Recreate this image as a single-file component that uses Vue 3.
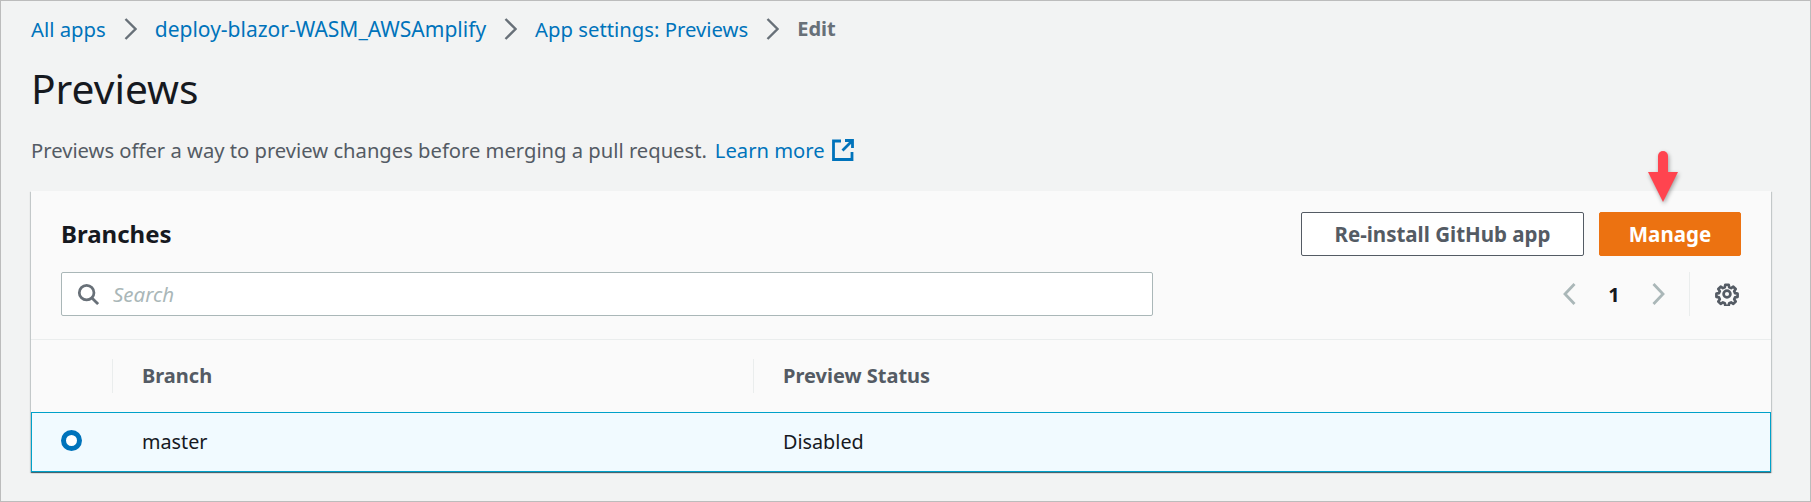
<script setup>
const crumbs = [
  { label: 'All apps', wide: false },
  { label: 'deploy-blazor-WASM_AWSAmplify', wide: true },
  { label: 'App settings: Previews', wide: false }
]
</script>

<template>
  <main class="page">
    <nav class="crumbs">
      <template v-for="c in crumbs" :key="c.label">
        <a class="crumb-link" :class="{ wide: c.wide }">{{ c.label }}</a>
        <svg class="crumb-sep" width="13" height="22" viewBox="0 0 13 22"><path d="M1.500 1l10 10-10 10" fill="none" stroke="#687078" stroke-width="2.400"/></svg>
      </template>
      <span class="crumb-current">Edit</span>
    </nav>

    <h1 class="title">Previews</h1>

    <p class="desc">
      <span>Previews offer a way to preview changes before merging a pull request.</span>
      <a class="learn">Learn more
        <svg width="22" height="22" viewBox="0 0 22 22" class="ext"><path d="M9 2H1.500v18.500H20V13M13 1.500h7.500V9M20 2l-9.500 9.500" fill="none" stroke="#0073bb" stroke-width="2.800"/></svg>
      </a>
    </p>

    <section class="card">
      <svg class="arrow" width="34" height="58" viewBox="0 0 34 58">
        <path d="M17 8v20" stroke="#ff444f" stroke-width="10" stroke-linecap="round"/>
        <path d="M2 24h30L17 54z" fill="#ff444f"/>
      </svg>

      <div class="top">
        <div class="left">
          <h2 class="card-title">Branches</h2>
          <div class="search">
            <svg width="22" height="22" viewBox="0 0 24 24"><circle cx="10.500" cy="10.500" r="8" fill="none" stroke="#687078" stroke-width="3"/><path d="M16 16l7 7" stroke="#687078" stroke-width="3"/></svg>
            <span class="placeholder">Search</span>
          </div>
        </div>
        <div class="right">
          <div class="actions">
            <button class="btn btn-normal">Re-install GitHub app</button>
            <button class="btn btn-primary">Manage</button>
          </div>
          <div class="tools">
            <svg width="13" height="24" viewBox="0 0 13 24"><path d="M11.500 2L2 12l9.500 10" fill="none" stroke="#aab7b8" stroke-width="2.800"/></svg>
            <span class="page-no">1</span>
            <svg width="13" height="24" viewBox="0 0 13 24"><path d="M1.500 2L11 12 1.500 22" fill="none" stroke="#aab7b8" stroke-width="2.800"/></svg>
            <span class="tool-sep"></span>
            <svg class="gear" width="24" height="24" viewBox="0 0 24 24">
              <circle cx="12" cy="12" r="3.400" fill="none" stroke="#545b64" stroke-width="2.700"/>
              <path d="M10 1.500h4l.6 3 2.300 1 2.600-1.700 2.800 2.800-1.700 2.600 1 2.300 3 .6v3.800l-3 .6-1 2.300 1.700 2.600-2.800 2.800-2.600-1.700-2.300 1-.6 3h-4l-.6-3-2.300-1-2.600 1.700-2.800-2.800 1.700-2.600-1-2.300-3-.6v-3.800l3-.6 1-2.300-1.700-2.600 2.800-2.800 2.600 1.700 2.300-1z" transform="translate(12 12) scale(.84) translate(-12 -12.500)" fill="none" stroke="#545b64" stroke-width="3.200" stroke-linejoin="round"/>
            </svg>
          </div>
        </div>
      </div>

      <div class="row head">
        <div class="cell-radio"></div>
        <div class="cell-branch">Branch</div>
        <div class="cell-status">Preview Status</div>
      </div>

      <div class="row selected">
        <div class="cell-radio"><span class="radio"></span></div>
        <div class="cell-branch">master</div>
        <div class="cell-status">Disabled</div>
      </div>
    </section>
  </main>
</template>

<style>
html, body { margin: 0; }
</style>

<style scoped>
.page {
  box-sizing: border-box;
  width: 1811px;
  height: 502px;
  padding: 0 39px 0 30px;
  background: #f2f3f3;
  border: 1px solid #bcbcbc;
  font-family: "Noto Sans", "Open Sans", sans-serif;
  color: #16191f;
  overflow: hidden;
}
.crumbs {
  display: flex;
  align-items: center;
  gap: 18px;
  height: 22px;
  padding-top: 17px;
  font-size: 20.300px;
  line-height: 22px;
  white-space: nowrap;
}
.crumb-link { color: #0073bb; }
.crumb-link.wide { font-size: 21px; }
.crumb-current { font-weight: 700; color: #687078; font-size: 20px; }
.title {
  margin: 26px 0 0;
  font-size: 40.700px;
  line-height: 44px;
  font-weight: 400;
  color: #16191f;
}
.desc {
  display: flex;
  align-items: center;
  gap: 8px;
  margin: 28px 0 0;
  font-size: 20.200px;
  line-height: 24px;
  color: #545b64;
  white-space: nowrap;
}
.learn { display: inline-flex; align-items: center; gap: 7px; color: #0073bb; }
.card {
  position: relative;
  box-sizing: border-box;
  width: 1740px;
  height: 281px;
  margin: 29px 0 0;
  background: #fafafa;
  box-shadow: 0 1px 1px 0 rgba(0, 28, 36, .3), 1px 1px 1px 0 rgba(0, 28, 36, .15), -1px 1px 1px 0 rgba(0, 28, 36, .15);
}
.arrow {
  position: absolute;
  left: 1615px;
  top: -43px;
  filter: drop-shadow(1px 2px 2px rgba(0, 0, 0, .35));
}
.top {
  display: flex;
  justify-content: space-between;
  height: 149px;
  padding: 21px 30px 0 30px;
  box-sizing: border-box;
  border-bottom: 1px solid #eaeded;
}
.left { width: 1092px; }
.card-title {
  margin: 0;
  font-size: 24px;
  line-height: 44px;
  font-weight: 700;
}
.search {
  display: flex;
  align-items: center;
  gap: 14px;
  box-sizing: border-box;
  height: 44px;
  margin-top: 16px;
  padding-left: 15px;
  background: #fff;
  border: 1px solid #aab7b8;
  border-radius: 2px;
}
.placeholder { font-size: 20.500px; font-style: italic; color: #aab7b8; }
.right { display: flex; flex-direction: column; align-items: flex-end; }
.actions { display: flex; gap: 15px; }
.btn {
  box-sizing: border-box;
  height: 44px;
  border-radius: 2px;
  font-family: inherit;
  font-size: 20.500px;
  font-weight: 700;
  padding: 0;
}
.btn-normal { width: 283px; background: #fff; border: 1px solid #545b64; color: #545b64; }
.btn-primary { width: 142px; background: #ec7211; border: 1px solid #ec7211; color: #fff; }
.tools {
  display: flex;
  align-items: center;
  height: 44px;
  margin-top: 16px;
  padding-right: 2px;
}
.page-no { width: 76px; text-align: center; font-size: 20px; font-weight: 700; }
.tool-sep { width: 1px; height: 44px; margin: 0 25px 0 24px; background: #eaeded; }
.gear { display: block; }
.row {
  display: flex;
  align-items: center;
  box-sizing: border-box;
}
.head {
  height: 72px;
  font-size: 20px;
  font-weight: 700;
  color: #545b64;
}
.selected {
  height: 60px;
  background: #f1faff;
  border: 1px solid #00a1c9;
  box-shadow: 0 1px 0 0 rgba(0, 60, 80, .45);
  font-size: 19.800px;
  color: #16191f;
}
.cell-radio {
  box-sizing: border-box;
  width: 82px;
  height: 34px;
  display: flex;
  align-items: center;
  padding-left: 29px;
}
.head .cell-radio { border-right: 1px solid #eaeded; }
.cell-branch { box-sizing: border-box; width: 641px; height: 34px; line-height: 34px; padding-left: 29px; }
.head .cell-branch { border-right: 1px solid #eaeded; }
.selected .cell-radio { width: 81px; }
.cell-status { padding-left: 29px; line-height: 34px; }
.radio {
  box-sizing: border-box;
  width: 21px;
  height: 21px;
  margin-bottom: 3px;
  border-radius: 50%;
  border: 5.500px solid #0073bb;
  background: #fff;
}
</style>
